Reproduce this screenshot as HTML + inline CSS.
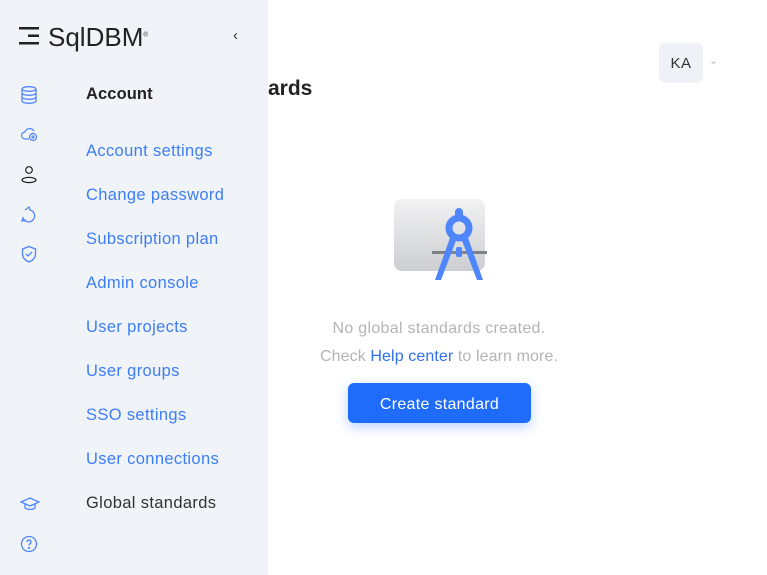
<!DOCTYPE html>
<html><head><style>
body{margin:0;width:767px;height:575px;background:#fff;font-family:"Liberation Sans",sans-serif;position:relative;overflow:hidden}
.side{position:absolute;left:0;top:0;width:268px;height:575px;background:#f0f3f8}
.t{position:absolute;white-space:nowrap}
.nav{left:86px;font-size:16.5px;color:#3d7ef5;letter-spacing:0.35px}
.ic{position:absolute;left:20px}
</style></head><body>
<div class="t" style="left:268px;top:77px;font-size:21px;font-weight:bold;color:#222">ards</div>
<div style="position:absolute;left:659px;top:43px;width:44px;height:40px;background:#eef1f6;border-radius:6px;font-size:15px;color:#333;text-align:center;line-height:42px;letter-spacing:0.5px">KA</div>
<div class="t" style="left:709px;top:54px;font-size:11px;color:#bbb">&#8964;</div>
<svg style="position:absolute;left:393px;top:198px" width="96" height="86" viewBox="0 0 96 86">
<defs><linearGradient id="g" x1="0" y1="0" x2="0" y2="1"><stop offset="0" stop-color="#f2f2f3"/><stop offset="1" stop-color="#cdced1"/></linearGradient></defs>
<rect x="1" y="1" width="91" height="72" rx="8" fill="url(#g)"/>
<rect x="39" y="53" width="55" height="3" fill="#7f8288"/>
<rect x="62" y="10" width="8" height="12" rx="4" fill="#4f86fb"/>
<circle cx="66" cy="30" r="10" fill="none" stroke="#4f86fb" stroke-width="7"/>
<path d="M58 37 L42 82 L48 82 L64 40Z M74 37 L90 82 L84 82 L68 40Z" fill="#4f86fb"/>
<rect x="63" y="49" width="6" height="10" rx="2" fill="#4f86fb"/>
</svg>
<div class="t" style="left:0;width:878px;text-align:center;top:320px;font-size:16px;color:#b4b4b4;letter-spacing:0.3px">No global standards created.</div>
<div class="t" style="left:0;width:878px;text-align:center;top:348px;font-size:16px;color:#b4b4b4;letter-spacing:0.1px">Check <span style="color:#2f6ff0">Help center</span> to learn more.</div>
<div style="position:absolute;left:348px;top:383px;width:183px;height:40px;background:#1f6cfa;border-radius:6px;color:#fff;font-size:16px;letter-spacing:0.3px;text-align:center;line-height:43px;box-shadow:0 4px 12px rgba(31,108,250,.3)">Create standard</div>
<div class="side">
<svg style="position:absolute;left:19px;top:26px" width="22" height="20"><rect x="0" y="1" width="20" height="2.5" fill="#222"/><rect x="9" y="8.5" width="11" height="2.5" fill="#222"/><rect x="0" y="16" width="20" height="2.5" fill="#222"/></svg>
<div class="t" style="left:48px;top:22px;font-size:26px;color:#222;letter-spacing:0px">SqlDBM<sup style="font-size:6px">®</sup></div>
<div class="t" style="left:233px;top:27px;font-size:15px;color:#333">‹</div>
<div class="t" style="left:86px;top:85px;font-size:16.5px;font-weight:bold;color:#222;letter-spacing:0.1px">Account</div>
<div class="t nav" style="top:142px">Account settings</div>
<div class="t nav" style="top:186px">Change password</div>
<div class="t nav" style="top:230px">Subscription plan</div>
<div class="t nav" style="top:274px">Admin console</div>
<div class="t nav" style="top:318px">User projects</div>
<div class="t nav" style="top:362px">User groups</div>
<div class="t nav" style="top:406px">SSO settings</div>
<div class="t nav" style="top:450px">User connections</div>
<div class="t nav" style="top:494px;color:#333">Global standards</div>
<svg class="ic" style="top:86px" width="18" height="18" fill="none" stroke="#4f86fb" stroke-width="1.3"><ellipse cx="9" cy="3" rx="7" ry="2.3"/><path d="M2 3v12c0 1.3 3 2.3 7 2.3s7-1 7-2.3V3M2 7c0 1.3 3 2.3 7 2.3s7-1 7-2.3M2 11c0 1.3 3 2.3 7 2.3s7-1 7-2.3"/></svg>
<svg class="ic" style="top:127px" width="20" height="16" fill="none" stroke="#4f86fb" stroke-width="1.2"><path d="M9 12H5a3.5 3.5 0 0 1 0-7 5 5 0 0 1 9-1"/><circle cx="13" cy="10" r="3.5"/><circle cx="13" cy="10" r="1"/></svg>
<svg class="ic" style="top:165px" width="18" height="20" fill="none" stroke="#222" stroke-width="1.2"><circle cx="9" cy="5" r="3.3"/><ellipse cx="9" cy="15" rx="7" ry="2.6"/></svg>
<svg class="ic" style="top:205px" width="18" height="18" fill="none" stroke="#4f86fb" stroke-width="1.3"><path d="M5 5l4-3 1 3a6 6 0 1 1-7 8l-1 3 4-1"/></svg>
<svg class="ic" style="top:245px" width="18" height="18" fill="none" stroke="#4f86fb" stroke-width="1.3"><path d="M9 1.5l6.5 2.5v5c0 4-3 6.5-6.5 8-3.5-1.5-6.5-4-6.5-8V4z"/><path d="M6 9l2 2 4-4"/></svg>
<svg class="ic" style="top:496px" width="20" height="16" fill="none" stroke="#4f86fb" stroke-width="1.3"><path d="M1 6l9-4 9 4-9 4z"/><path d="M5 8v4c3 2 7 2 10 0V8"/></svg>
<svg class="ic" style="top:535px" width="18" height="18" fill="none" stroke="#4f86fb" stroke-width="1.3"><circle cx="9" cy="9" r="7.5"/><path d="M7 7a2 2 0 1 1 2.5 2c-.5.2-.5.7-.5 1.5"/><circle cx="9" cy="13" r=".5"/></svg>
</div>
</body></html>
